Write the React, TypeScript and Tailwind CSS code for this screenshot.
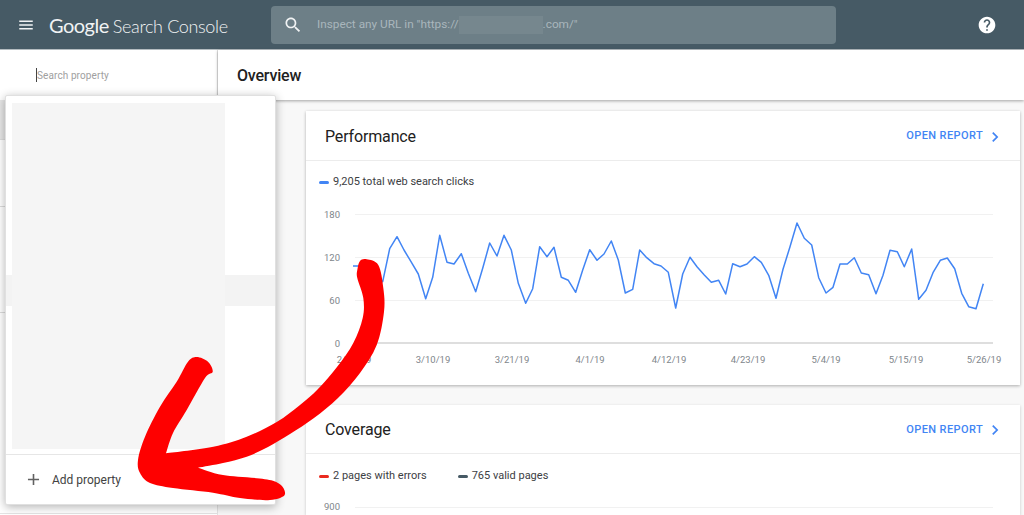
const linePoints = "353,266 361,266 368,268 375,272 382.7,281.7 389.7,248.7 397,236.7 404,250 411,261.7 418.3,274 425.7,298.7 432.7,277.3 439.7,235.3 447,262.3 454,264 461.3,253.7 468.3,273.3 475.7,291.7 482.7,268.3 489.7,243 497,256 504,235.3 511.3,250 518.3,283.3 525.7,303.3 532.7,288.7 539.7,246.7 547,256.7 554,247.3 561.3,277.3 568.3,280.3 575.7,292.3 582.7,270 589.7,249.7 597,260.3 604,254 611.3,241 618.3,260 625.3,293 632.7,289.3 639.7,250 646.7,257.7 654,263.7 661,266 668.3,272.3 675.7,308 682.7,274 690,257.3 697,266.7 704.3,275 711.3,282.3 718.7,280.3 725.7,294 732.7,263.7 740,266.7 747,264 754.3,256.7 761.3,262.3 768.7,275.3 776,298.3 783,269.3 790,246.7 797,223 804.3,238.3 811.7,245 818.7,277.7 826,293 833,287.3 840,264 847.3,264 854.3,257.7 861.3,273 868.7,274.7 876,293.7 883,275.3 890,250.3 897.3,251.7 904.3,266.7 911.7,249 918.7,299.3 926,290.3 933,272.7 940.3,260.3 947.3,258 954.7,268.7 961.7,293.3 968.7,306.7 976,308.7 983.3,283.7";

const xLabels = [
  ["2/27/19", 354],
  ["3/10/19", 433],
  ["3/21/19", 512],
  ["4/1/19", 590],
  ["4/12/19", 669],
  ["4/23/19", 748],
  ["5/4/19", 826],
  ["5/15/19", 906],
  ["5/26/19", 984],
] as const;

const yLabels = [
  ["180", 214.5],
  ["120", 257.5],
  ["60", 300.5],
] as const;

// outline of the hand drawn arrow, corners are doubled points
const arrowPoints = [
  [360, 261], [366.7, 259.3], [378.3, 265], [383.3, 288], [384, 311.7], [376.7, 345], [360, 373],
  [338, 398], [314, 418], [290, 434], [268, 447], [246.7, 456.7], [223, 463], [198, 467.7],
  [198, 467.7], [223, 475], [273, 480.7], [285, 494], [270, 500], [240, 498], [213, 492.7], [173, 488],
  [150, 483], [140, 473], [138, 460], [145, 436.7], [160, 406.7], [176.7, 381.7], [188, 361.7],
  [196.7, 357], [208, 361.7], [212.7, 371.7], [205, 378], [186.7, 410], [173, 433], [166, 453.3],
  [166, 453.3], [213.3, 446.7], [246.7, 436.7], [276.7, 422], [300, 405], [318, 389], [337, 367],
  [353.3, 343], [362.7, 318], [363.3, 298], [357.3, 278], [357.3, 270],
];

const smoothPath = (pts: number[][]) => {
  const n = pts.length;
  let d = `M${pts[0][0]} ${pts[0][1]}`;
  for (let i = 0; i < n; i++) {
    const p0 = pts[(i - 1 + n) % n];
    const p1 = pts[i];
    const p2 = pts[(i + 1) % n];
    const p3 = pts[(i + 2) % n];
    const c1x = p1[0] + (p2[0] - p0[0]) / 6;
    const c1y = p1[1] + (p2[1] - p0[1]) / 6;
    const c2x = p2[0] - (p3[0] - p1[0]) / 6;
    const c2y = p2[1] - (p3[1] - p1[1]) / 6;
    d += ` C${c1x.toFixed(1)} ${c1y.toFixed(1)} ${c2x.toFixed(1)} ${c2y.toFixed(1)} ${p2[0]} ${p2[1]}`;
  }
  return d + " Z";
};

const Icon = ({ d, className }: { d: string; className: string }) => (
  <svg viewBox="0 0 24 24" className={className} fill="currentColor">
    <path d={d} />
  </svg>
);

const OpenReport = () => (
  <div className="flex items-center gap-[2px] text-[#4285f4]">
    <span className="text-[11px] font-medium tracking-[0.4px]">OPEN REPORT</span>
    <Icon d="M10 6L8.59 7.41 13.17 12l-4.58 4.59L10 18l6-6z" className="w-[20px] h-[20px]" />
  </div>
);

const PerformanceChart = () => (
  <svg viewBox="306 203 714 171" className="w-[714px] h-[171px]">
    {yLabels.map(([label, y]) => (
      <g key={label}>
        <line x1="355" x2="993" y1={y} y2={y} stroke="#f1f1f1" />
        <text x="340" y={y + 3.5} textAnchor="end" fontSize="9.5" fill="#80868b">{label}</text>
      </g>
    ))}
    <line x1="355" x2="993" y1="343" y2="343" stroke="#bdbdbd" />
    <text x="340" y="346.5" textAnchor="end" fontSize="9.5" fill="#80868b">0</text>
    {xLabels.map(([label, x]) => (
      <text key={label} x={x} y="362.5" textAnchor="middle" fontSize="9.5" fill="#80868b">{label}</text>
    ))}
    <polyline points={linePoints} fill="none" stroke="#4285f4" strokeWidth="1.5" strokeLinejoin="round" />
  </svg>
);

const RedArrow = () => (
  <svg viewBox="0 0 1024 515" className="absolute inset-0 w-[1024px] h-[515px] pointer-events-none">
    <path fill="#fe0000" d={smoothPath(arrowPoints)} />
  </svg>
);

export default function App() {
  return (
    <div className="relative w-[1024px] h-[515px] overflow-hidden bg-white font-['Roboto',sans-serif]">
      <header className="h-[50px] bg-[#465a65] border-b border-[#b4bcc0] flex items-center">
        <Icon d="M3 18h18v-2H3v2zm0-5h18v-2H3v2zm0-7v2h18V6H3z" className="w-[18px] h-[18px] ml-[17px] text-[#f1f3f4]" />
        <div className="ml-[14px] w-[222px] text-[#f1f3f4] whitespace-nowrap font-['Lato',sans-serif] flex items-baseline">
          <span className="text-[20px] tracking-[-0.5px]">Google</span>
          <span className="ml-[4px] text-[18px] font-light tracking-[-0.35px]">Search Console</span>
        </div>
        <div className="w-[565px] h-[38px] rounded bg-[#6d7f87] flex items-center">
          <Icon
            d="M15.5 14h-.79l-.28-.27C15.41 12.59 16 11.11 16 9.5 16 5.91 13.09 3 9.5 3S3 5.91 3 9.5 5.91 16 9.5 16c1.61 0 3.09-.59 4.23-1.57l.27.28v.79l5 4.99L20.49 19l-4.99-5zm-6 0C7.01 14 5 11.99 5 9.5S7.01 5 9.5 5 14 7.01 14 9.5 11.99 14 9.5 14z"
            className="w-[20px] h-[20px] ml-[12px] text-[#f1f3f4]"
          />
          <div className="ml-[14px] flex items-center text-[11.8px] text-[#a9b6bc] whitespace-nowrap">
            <span>Inspect any URL in "https://</span>
            <span className="w-[84px] h-[18px] bg-[#76878e]" />
            <span>.com/"</span>
          </div>
        </div>
        <Icon
          d="M12 2C6.48 2 2 6.48 2 12s4.48 10 10 10 10-4.48 10-10S17.52 2 12 2zm1 17h-2v-2h2v2zm2.07-7.75l-.9.92C13.45 12.9 13 13.5 13 15h-2v-.5c0-1.1.45-2.1 1.17-2.83l1.24-1.26c.37-.36.59-.86.59-1.41 0-1.1-.9-2-2-2s-2 .9-2 2H8c0-2.21 1.79-4 4-4s4 1.79 4 4c0 .88-.36 1.68-.93 2.25z"
          className="w-[20px] h-[20px] ml-[141px] text-white"
        />
      </header>

      <div className="flex h-[465px]">
        <aside className="w-[218px] shrink-0 border-r border-[#e4e4e4] bg-white">
          <div className="h-[50px] flex items-center pl-[36px]">
            <span className="w-px h-[14px] bg-[#444]" />
            <span className="text-[10px] text-[#a0a0a0] tracking-[0.1px]">Search property</span>
          </div>
          <div className="h-[40px] bg-[#e6e6e6] border-b border-[#dcdcdc]" />
          <div className="h-[67px] border-b border-[#dcdcdc]" />
          <div className="h-[106px] border-b border-[#dcdcdc]" />
          <div className="h-[201px] border-b border-[#e4e4e4]" />
        </aside>

        <main className="flex-1 bg-[#f8f8f8] min-w-0">
          <div className="h-[50px] bg-white shadow-[0_1px_3px_rgba(0,0,0,0.35)] flex items-center pl-[19px] pt-px">
            <h1 className="text-[16px] font-medium text-[#212121] tracking-[-0.2px]">Overview</h1>
          </div>
          <div className="pt-[11px] pl-[88px] pr-[4px] flex flex-col gap-[20px]">
            <section className="h-[274px] bg-white shadow-[0_1px_3px_rgba(0,0,0,0.3)]">
              <div className="h-[50px] border-b border-[#ececec] flex items-center justify-between pl-[19px] pr-[15px] pt-[2px]">
                <h2 className="text-[16px] text-[#212121] tracking-[-0.15px]">Performance</h2>
                <OpenReport />
              </div>
              <div className="h-[42px] flex items-center pl-[13px] gap-[4px] text-[11px] text-[#3c4043]">
                <span className="w-[10px] h-[3px] rounded-sm bg-[#4285f4]" />
                <span>9,205 total web search clicks</span>
              </div>
              <PerformanceChart />
            </section>

            <section className="h-[110px] bg-white shadow-[0_1px_3px_rgba(0,0,0,0.2)]">
              <div className="h-[49px] border-b border-[#ececec] flex items-center justify-between pl-[19px] pr-[15px] pt-[2px]">
                <h2 className="text-[16px] text-[#212121] tracking-[-0.15px]">Coverage</h2>
                <OpenReport />
              </div>
              <div className="h-[45px] flex items-center pl-[13px] text-[11px] text-[#3c4043]">
                <span className="w-[10px] h-[3px] rounded-sm bg-[#ea2a1f] mr-[4px]" />
                <span>2 pages with errors</span>
                <span className="w-[10px] h-[3px] rounded-sm bg-[#465a65] ml-[31px] mr-[4px]" />
                <span>765 valid pages</span>
              </div>
              <div className="flex items-center h-[16px]">
                <span className="w-[34px] text-right text-[9.5px] text-[#80868b]">900</span>
                <span className="ml-[15px] w-[638px] h-px bg-[#f1f1f1]" />
              </div>
            </section>
          </div>
        </main>
      </div>

      <div className="absolute left-[5px] top-[95px] w-[271px] h-[410px] bg-white rounded-[2px] border border-[#e0e0e0] shadow-[0_2px_10px_rgba(0,0,0,0.3)] flex flex-col">
        <div className="relative flex-1 pt-[7px] pl-[6px] pb-[4px]">
          <div className="absolute left-0 right-0 top-[179px] h-[31px] bg-[#f3f3f3]" />
          <div className="relative w-[213px] h-[346px] bg-[#f5f5f5]" />
        </div>
        <div className="h-[50px] border-t border-[#e6e6e6] flex items-center pl-[18px] gap-[9px] text-[#424242]">
          <Icon d="M19 13h-6v6h-2v-6H5v-2h6V5h2v6h6v2z" className="w-[19px] h-[19px] text-[#616161]" />
          <span className="text-[12px]">Add property</span>
        </div>
      </div>

      <RedArrow />
    </div>
  );
}
